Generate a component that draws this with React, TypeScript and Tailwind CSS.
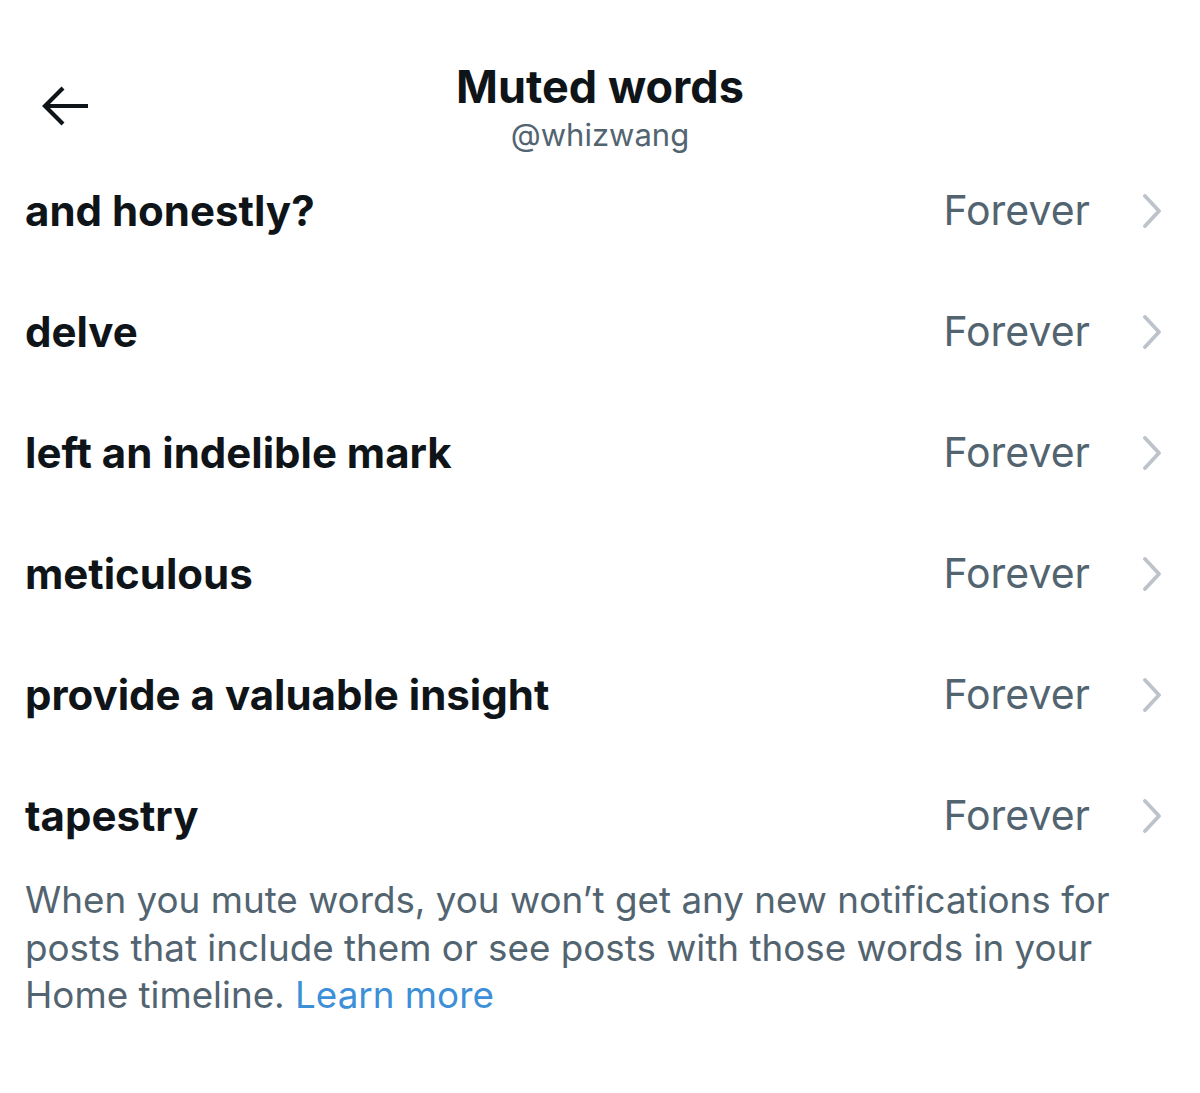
import React from 'react';

const words = [
  'and honestly?',
  'delve',
  'left an indelible mark',
  'meticulous',
  'provide a valuable insight',
  'tapestry',
];

const BackArrow = () => (
  <svg width="52" height="46" viewBox="0 0 52 46" fill="none" stroke="#0f1419" strokeWidth="4.2" strokeLinecap="butt">
    <path d="M48 22H6" />
    <path d="M23 4L5 22L23 40" strokeLinejoin="miter" />
  </svg>
);

const Chevron = () => (
  <svg width="20" height="34" viewBox="0 0 20 34" fill="none" stroke="#bcc3ca" strokeWidth="3.8" strokeLinecap="round" strokeLinejoin="round">
    <path d="M3 2L17 17L3 32" />
  </svg>
);

const App = () => {
  return (
    <div className="min-h-screen bg-white text-[#0f1419]" style={{ fontFamily: 'Inter, "Noto Sans", sans-serif' }}>
      <header className="relative pt-[60px] flex flex-col items-center">
        <div className="absolute left-[40px] top-[84px]">
          <BackArrow />
        </div>
        <h1 className="text-[45px] leading-[54px] font-bold">Muted words</h1>
        <p className="text-[31px] leading-[36px] pt-[3px] text-[#536471]">@whizwang</p>
      </header>

      <ul className="px-[25px] -mt-[3px]">
        {words.map((w) => (
          <li key={w} className="h-[121px] flex items-center justify-between">
            <span className="text-[42px] font-bold">{w}</span>
            <span className="flex items-center gap-[52px] pr-[13px]">
              <span className="text-[41px] text-[#536471]">Forever</span>
              <Chevron />
            </span>
          </li>
        ))}
      </ul>

      <p className="px-[25px] text-[36.8px] leading-[47.5px] text-[#536471]">
        When you mute words, you won’t get any new notifications for posts that include them or see posts with those words in your Home timeline.{' '}
        <a className="text-[#3d8fd8]">Learn more</a>
      </p>
    </div>
  );
};

export default App;
